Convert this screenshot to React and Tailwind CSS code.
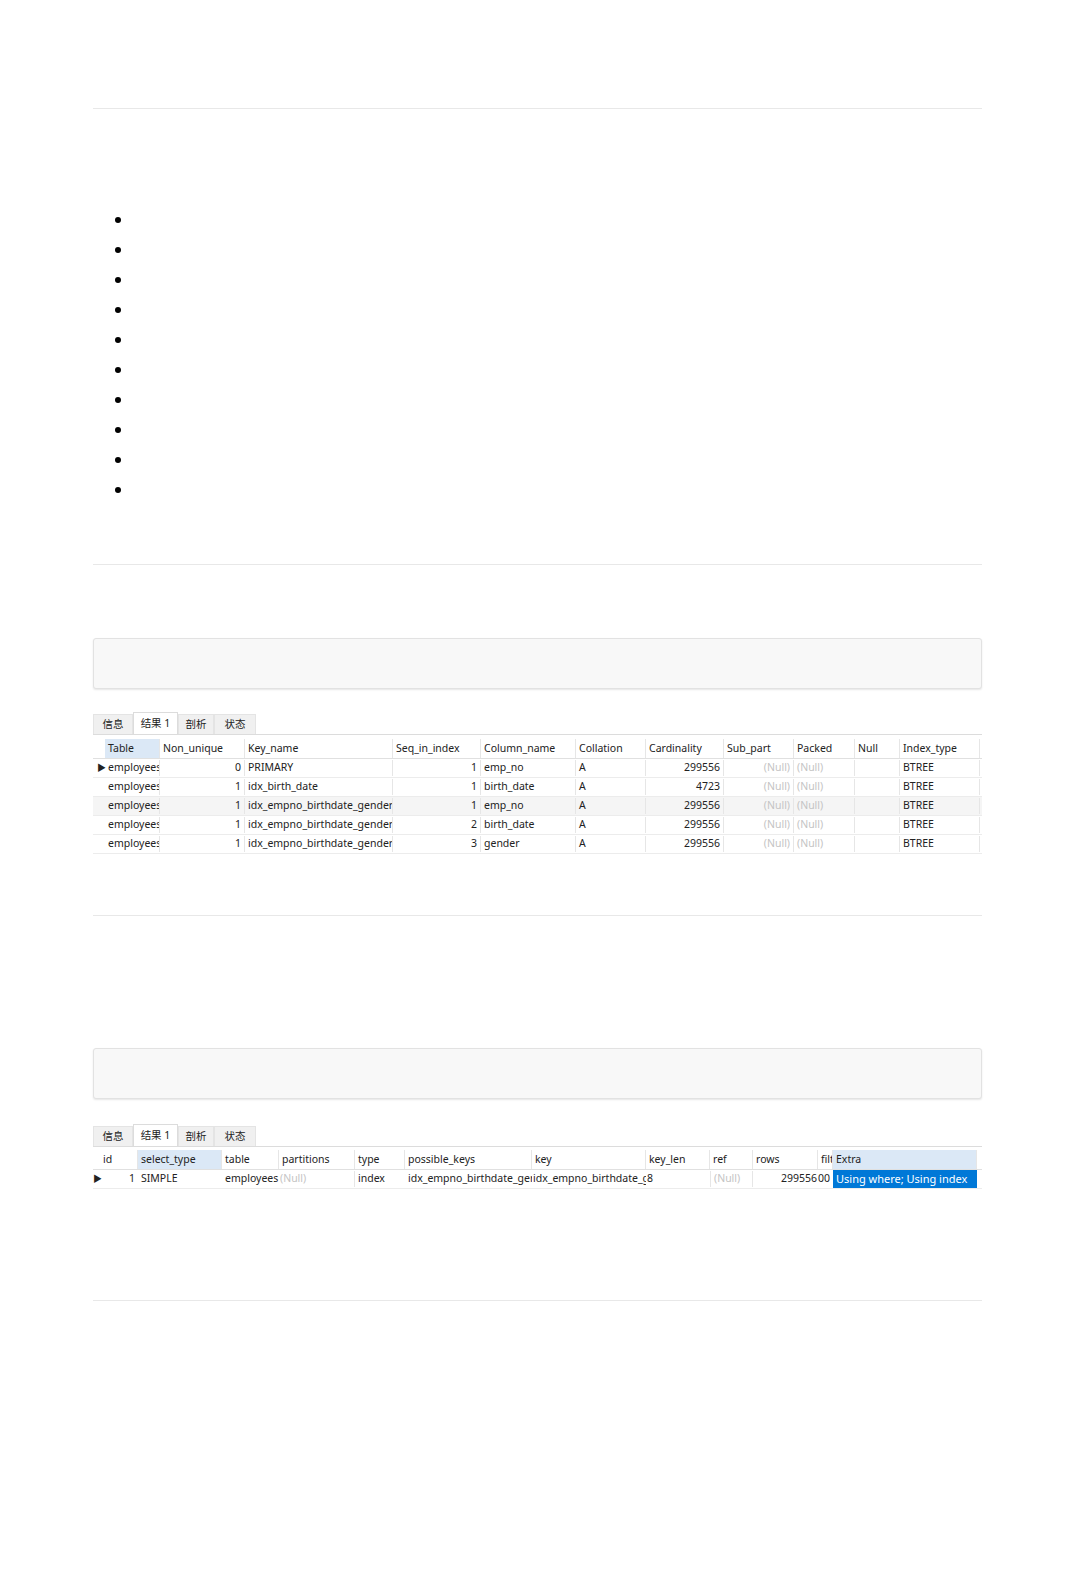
import React from 'react';

const font = { fontFamily: '"Noto Sans", "Noto Sans CJK SC", sans-serif' };

const Tabs = () => (
  <div className="flex items-end border-b border-[#dcdcdc] h-[22px]">
    <div className="w-[40px] h-[20px] flex items-center justify-center bg-[#f0f0f0] border border-[#e4e4e4] border-b-0">信息</div>
    <div className="w-[45px] h-[22px] flex items-center justify-center bg-white border border-[#dcdcdc] border-b-0">结果 1</div>
    <div className="w-[36px] h-[20px] flex items-center justify-center bg-[#f0f0f0] border border-[#e4e4e4] border-b-0">剖析</div>
    <div className="w-[42px] h-[20px] flex items-center justify-center bg-[#f0f0f0] border border-[#e4e4e4] border-b-0">状态</div>
  </div>
);

const Null = () => <span className="text-[#c4c4c4]">(Null)</span>;

const cols1 = [
  ['Table', 55], ['Non_unique', 85], ['Key_name', 148], ['Seq_in_index', 88], ['Column_name', 95],
  ['Collation', 70], ['Cardinality', 78], ['Sub_part', 70], ['Packed', 61], ['Null', 45], ['Index_type', 80],
];
const rows1 = [
  ['0', 'PRIMARY', '1', 'emp_no', '299556'],
  ['1', 'idx_birth_date', '1', 'birth_date', '4723'],
  ['1', 'idx_empno_birthdate_gender', '1', 'emp_no', '299556'],
  ['1', 'idx_empno_birthdate_gender', '2', 'birth_date', '299556'],
  ['1', 'idx_empno_birthdate_gender', '3', 'gender', '299556'],
];

const Table1 = () => (
  <div className="text-[10.5px] text-[#222] mt-[24px] mb-[61px]">
    <Tabs />
    <div className="flex h-[20px] items-center border-b border-[#e0e0e0] mt-[4px]">
      <div className="w-[12px]" />
      {cols1.map(([n, w], i) => (
        <div key={n} style={{ width: w }} className={`h-full flex items-center px-[3px] border-r border-[#e6e6e6] ${i === 0 ? 'bg-[#dbe8f6]' : ''}`}>{n}</div>
      ))}
    </div>
    {rows1.map((r, i) => (
      <div key={i} className={`flex h-[19px] items-center border-b border-[#ececec] whitespace-nowrap ${i === 2 ? 'bg-[#f5f5f5]' : ''}`}>
        <div className="w-[12px] text-[9px] pl-[4px]">{i === 0 ? '▶' : ''}</div>
        <div className="w-[55px] pl-[3px] overflow-hidden border-r border-[#e6e6e6]">employees</div>
        <div className="w-[85px] px-[3px] text-right border-r border-[#e6e6e6]">{r[0]}</div>
        <div className="w-[148px] px-[3px] overflow-hidden border-r border-[#e6e6e6]">{r[1]}</div>
        <div className="w-[88px] px-[3px] text-right border-r border-[#e6e6e6]">{r[2]}</div>
        <div className="w-[95px] px-[3px] border-r border-[#e6e6e6]">{r[3]}</div>
        <div className="w-[70px] px-[3px] border-r border-[#e6e6e6]">A</div>
        <div className="w-[78px] px-[3px] text-right border-r border-[#e6e6e6]">{r[4]}</div>
        <div className="w-[70px] px-[3px] text-right border-r border-[#e6e6e6]"><Null /></div>
        <div className="w-[61px] px-[3px] border-r border-[#e6e6e6]"><Null /></div>
        <div className="w-[45px] px-[3px] border-r border-[#e6e6e6]">&nbsp;</div>
        <div className="w-[80px] px-[3px] border-r border-[#e6e6e6]">BTREE</div>
      </div>
    ))}
  </div>
);

const cols2 = [
  ['id', 38], ['select_type', 84], ['table', 57], ['partitions', 76], ['type', 50], ['possible_keys', 127],
  ['key', 114], ['key_len', 64], ['ref', 43], ['rows', 65], ['filt', 15], ['Extra', 144],
];

const Table2 = () => (
  <div className="text-[10.5px] text-[#222] mt-[26px] mb-[111px]">
    <Tabs />
    <div className="flex h-[20px] items-center border-b border-[#e0e0e0] mt-[3px]">
      <div className="w-[7px]" />
      {cols2.map(([n, w], i) => (
        <div key={n} style={{ width: w }} className={`h-full flex items-center px-[3px] overflow-hidden whitespace-nowrap border-r border-[#e6e6e6] ${i === 1 || i === 11 ? 'bg-[#dbe8f6]' : ''}`}>{n}</div>
      ))}
    </div>
    <div className="flex h-[19px] items-center border-b border-[#ececec] whitespace-nowrap">
      <div className="w-[7px] text-[9px]">▶</div>
      <div className="w-[38px] px-[3px] text-right">1</div>
      <div className="w-[84px] px-[3px]">SIMPLE</div>
      <div className="w-[57px] pl-[3px] overflow-hidden">employees</div>
      <div className="w-[76px] px-[1px] border-r border-[#e6e6e6]"><Null /></div>
      <div className="w-[50px] px-[3px]">index</div>
      <div className="w-[127px] pl-[3px] overflow-hidden">idx_empno_birthdate_gender</div>
      <div className="w-[114px] pl-[1px] overflow-hidden">idx_empno_birthdate_gender</div>
      <div className="w-[64px] px-[1px]">8</div>
      <div className="w-[43px] px-[3px] border-x border-[#e6e6e6]"><Null /></div>
      <div className="w-[65px] pr-[1px] text-right">299556</div>
      <div className="w-[15px] overflow-hidden">00</div>
      <div className="w-[144px] h-full flex items-center px-[3px] bg-[#0078d7] text-white text-[11px]">Using where; Using index</div>
    </div>
  </div>
);

export default function App() {
  return (
    <div className="bg-white w-[1076px] min-h-[1570px]" style={font}>
      <div className="ml-[93px] w-[889px] pt-[108px]">
        <hr className="border-t border-[#e8e8e8]" />
        <ul className="list-disc pl-[40px] mt-[95px] mb-[60px] text-[16px]">
          {Array.from({ length: 10 }).map((_, i) => (
            <li key={i} className="h-[30px] leading-[30px]">&nbsp;</li>
          ))}
        </ul>
        <hr className="border-t border-[#e8e8e8]" />
        <div className="mt-[73px] h-[51px] bg-[#f8f8f8] border border-[#e2e2e2] rounded-[3px] shadow-[0_1px_2px_rgba(0,0,0,0.1)]" />
        <Table1 />
        <hr className="border-t border-[#e8e8e8]" />
        <div className="mt-[132px] h-[51px] bg-[#f8f8f8] border border-[#e2e2e2] rounded-[3px] shadow-[0_1px_2px_rgba(0,0,0,0.1)]" />
        <Table2 />
        <hr className="border-t border-[#e8e8e8]" />
      </div>
    </div>
  );
}
